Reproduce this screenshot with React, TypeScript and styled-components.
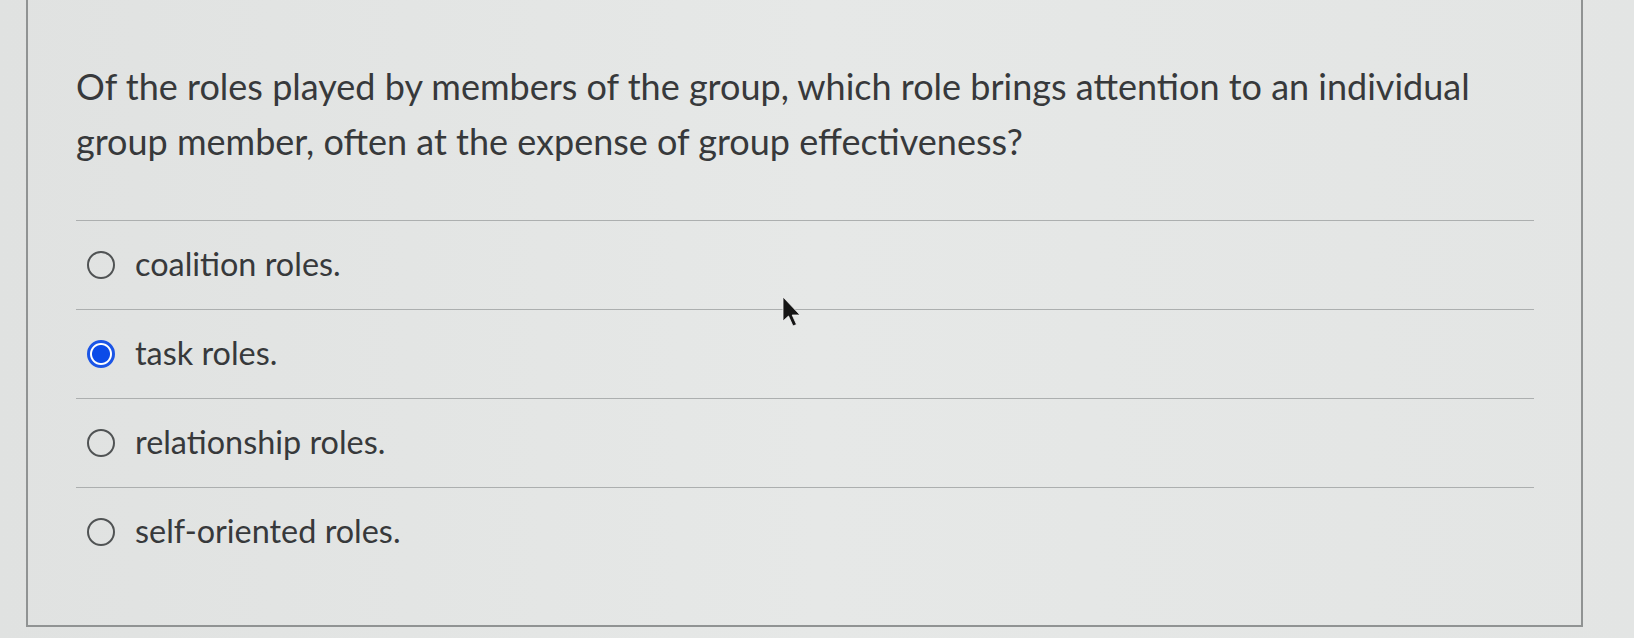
import React from "react";
import styled, { createGlobalStyle } from "styled-components";

const Global = createGlobalStyle`
  html, body {
    margin: 0;
    padding: 0;
    background: #e2e4e3;
  }
  body {
    font-family: Lato, "Open Sans", "Liberation Sans", sans-serif;
    -webkit-font-smoothing: antialiased;
  }
`;

const Page = styled.div`
  width: 1634px;
  height: 638px;
  overflow: hidden;
  position: relative;
  background: linear-gradient(90deg, #e0e2e1 0%, #e6e8e7 50%, #e3e5e4 100%);
`;

const Card = styled.section`
  margin-left: 26px;
  border: 2px solid #909393;
  border-top: none;
  padding: 59px 47px 0 48px;
  box-sizing: border-box;
  width: 1557px;
  height: 627px;
`;

const Question = styled.p`
  margin: 0;
  font-size: 36px;
  line-height: 55px;
  color: #37393b;
  font-weight: 400;
`;

const Options = styled.div`
  margin-top: 51px;
  display: flex;
  flex-direction: column;
`;

const OptionRow = styled.label`
  display: flex;
  align-items: center;
  gap: 20px;
  height: 88px;
  border-top: 1.5px solid #acafaf;
  padding-left: 11px;
  cursor: pointer;
`;

const Radio = styled.span<{ $checked?: boolean }>`
  width: 28px;
  height: 28px;
  border-radius: 50%;
  box-sizing: border-box;
  flex: none;
  border: ${(p) => (p.$checked ? "3px solid #1b55e6" : "2px solid #505354")};
  background: ${(p) =>
    p.$checked
      ? "radial-gradient(circle, #0b4be8 0 8.5px, #ffffff 9.5px 100%)"
      : "transparent"};
`;

const OptionText = styled.span`
  font-size: 32.4px;
  color: #37393b;
  line-height: 1;
  padding-bottom: 2px;
`;

const Cursor = styled.svg`
  position: absolute;
  left: 782px;
  top: 296px;
  width: 20px;
  height: 32px;
`;

const options = [
  { text: "coalition roles.", checked: false },
  { text: "task roles.", checked: true },
  { text: "relationship roles.", checked: false },
  { text: "self-oriented roles.", checked: false },
];

export default function App() {
  return (
    <Page>
      <Global />
      <Card>
        <Question>
          Of the roles played by members of the group, which role brings attention to an individual
          <br />
          group member, often at the expense of group effectiveness?
        </Question>
        <Options>
          {options.map((o) => (
            <OptionRow key={o.text}>
              <Radio $checked={o.checked} />
              <OptionText>{o.text}</OptionText>
            </OptionRow>
          ))}
        </Options>
      </Card>
      <Cursor viewBox="0 0 20 32">
        <path d="M1 1 L1 25 L6.5 20 L11 30 L14.5 28.5 L10.2 19 L18 19 Z" fill="#151515" stroke="#f2f2f2" strokeWidth="0.8" />
      </Cursor>
    </Page>
  );
}
